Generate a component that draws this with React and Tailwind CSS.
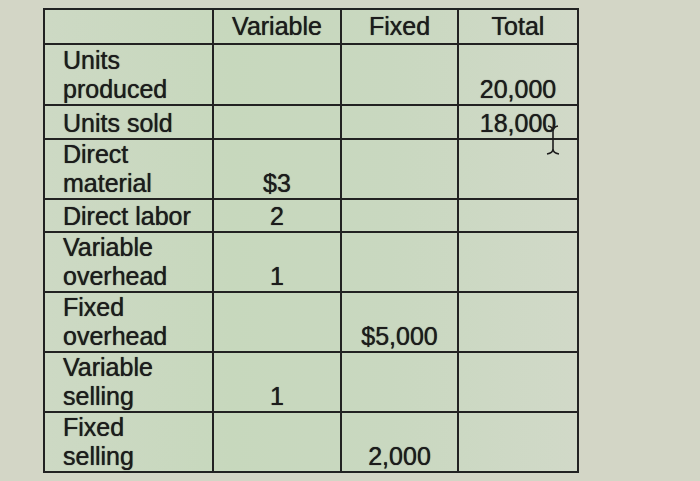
import React from 'react';

const rows = [
  { label: ['Units', 'produced'], variable: '', fixed: '', total: '20,000', h: 'h-[61px]' },
  { label: ['Units sold'], variable: '', fixed: '', total: '18,000', h: 'h-[34px]', cursor: true },
  { label: ['Direct', 'material'], variable: '$3', fixed: '', total: '', h: 'h-[60px]' },
  { label: ['Direct labor'], variable: '2', fixed: '', total: '', h: 'h-[33px]' },
  { label: ['Variable', 'overhead'], variable: '1', fixed: '', total: '', h: 'h-[60px]' },
  { label: ['Fixed', 'overhead'], variable: '', fixed: '$5,000', total: '', h: 'h-[59px]' },
  { label: ['Variable', 'selling'], variable: '1', fixed: '', total: '', h: 'h-[59px]' },
  { label: ['Fixed', 'selling'], variable: '', fixed: '2,000', total: '', h: 'h-[59px]' },
];

const App = () => {
  return (
    <div
      className="w-[700px] h-[481px] overflow-hidden bg-[#d3d6c6] pt-[8px] pl-[43px] text-[#1c1c1c]"
      style={{ fontFamily: '"Liberation Sans", Arial, sans-serif' }}
    >
      <table className="border-collapse text-[25px] leading-[29px] [text-shadow:0_0_0.8px_#1c1c1c] bg-[linear-gradient(90deg,#cdd9c4_0%,#c7d8bd_35%,#c9d8c0_65%,#d1d9c8_100%)]">
        <colgroup>
          <col className="w-[169px]" />
          <col className="w-[128px]" />
          <col className="w-[117px]" />
          <col className="w-[120px]" />
        </colgroup>
        <thead>
          <tr className="h-[35px]">
            <th className="border-2 border-[#222]"></th>
            <th className="border-2 border-[#222] font-normal text-center align-middle">Variable</th>
            <th className="border-2 border-[#222] font-normal text-center align-middle">Fixed</th>
            <th className="border-2 border-[#222] font-normal text-center align-middle">Total</th>
          </tr>
        </thead>
        <tbody>
          {rows.map((row, i) => (
            <tr key={i} className={row.h}>
              <td className="border-2 border-[#222] pl-[18px] align-bottom">
                {row.label.map((l) => (
                  <div key={l}>{l}</div>
                ))}
              </td>
              <td className="border-2 border-[#222] text-center align-bottom">{row.variable}</td>
              <td className="border-2 border-[#222] text-center align-bottom">{row.fixed}</td>
              <td className="border-2 border-[#222] text-center align-bottom relative">
                {row.total}
                {row.cursor && (
                  <svg className="absolute right-[16px] top-[19px] w-[16px] h-[30px] z-10" viewBox="0 0 16 30" fill="none" stroke="#1c1c1c" strokeWidth="1.6">
                    <path d="M3 1 Q8 2 8 6 Q8 2 13 1" />
                    <path d="M8 6 V24" />
                    <path d="M2 29 Q8 28 8 24 Q8 28 14 29" />
                  </svg>
                )}
              </td>
            </tr>
          ))}
        </tbody>
      </table>
    </div>
  );
};

export default App;
